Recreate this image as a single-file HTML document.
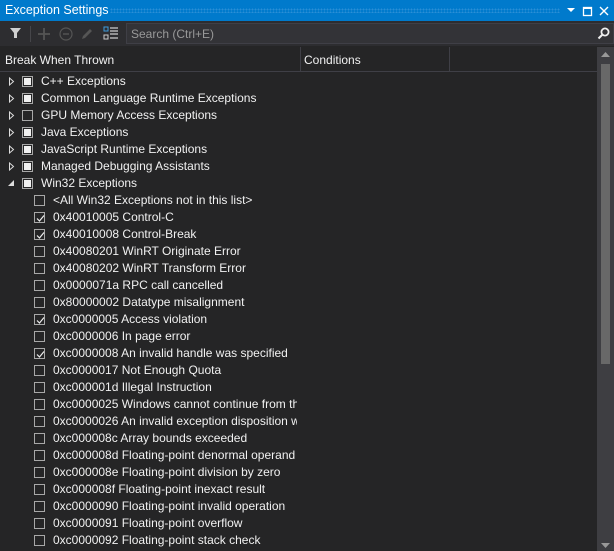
<!DOCTYPE html>
<html><head><meta charset="utf-8">
<style>
*{margin:0;padding:0;box-sizing:border-box}
body{width:614px;height:551px;overflow:hidden;background:#252526;font-family:"Liberation Sans",sans-serif;font-size:12px;color:#f1f1f1;position:relative}
.title{position:absolute;left:0;top:0;width:614px;height:21px;background:#007acc}
.title span{position:absolute;left:5px;top:3px;font-size:12.5px;color:#fff}
.dots{position:absolute;left:110px;top:8px;width:450px;height:5px;background-image:radial-gradient(#2a8fd6 0.8px,transparent 0.9px);background-size:3px 3px}
.tb{position:absolute;left:0;top:21px;width:614px;height:25px;background:#2d2d30}
.search{position:absolute;left:126px;top:23px;width:488px;height:21px;background:#333337;border:1px solid #3f3f46}
.search span{position:absolute;left:4px;top:3px;color:#999;font-size:12px}
.hdr{position:absolute;left:0;top:47px;width:597px;height:25px;background:#252526;border-bottom:1px solid #3f3f46}
.hdr span{position:absolute;top:6px}
.sep{position:absolute;top:47px;width:1px;height:24px;background:#3f3f46}
.row{position:absolute;height:17px;width:297px;overflow:hidden;white-space:nowrap}
.row .t{position:absolute;top:1px}
.cb{position:absolute;top:3px;width:11px;height:11px;border:1px solid #a8a8a8}
.cb.f::after{content:"";position:absolute;left:1px;top:1px;width:7px;height:7px;background:#f1f1f1}
.tri{position:absolute;left:8px;top:4px}
.sb{position:absolute;left:597px;top:47px;width:17px;height:504px;background:#3e3e42}
.thumb{position:absolute;left:4px;top:17px;width:9px;height:300px;background:#686868}
</style></head><body>
<div class="title"><span>Exception Settings</span><div class="dots"></div>
<svg style="position:absolute;left:566px;top:6px" width="44" height="12"><path d="M1 2h8l-4 4z" fill="#fff"/><rect x="17.5" y="1.5" width="8" height="8" fill="none" stroke="#fff" stroke-width="1.3"/><rect x="17" y="1" width="9" height="2" fill="#fff"/><path d="M34 1l8 8M42 1l-8 8" stroke="#fff" stroke-width="1.4"/></svg>
</div>
<div class="tb">
<svg style="position:absolute;left:0;top:0" width="126" height="25"><path d="M10 7h11l-4 5v5h-3v-5z" fill="#d0d0d0"/><rect x="30" y="5" width="1" height="16" fill="#46464a"/><path d="M44 7v12M38 13h12" stroke="#555" stroke-width="1.8"/><circle cx="66" cy="13" r="6" fill="none" stroke="#555" stroke-width="1.2"/><path d="M63 13h6" stroke="#555" stroke-width="1.4"/><path d="M82 18l1-3 7-7 2 2-7 7z" fill="#555"/><rect x="104" y="6" width="4" height="4" fill="none" stroke="#3d9bdc"/><rect x="104" y="14" width="4" height="4" fill="none" stroke="#ccc"/><path d="M110 7h8M110 10h8M110 13h8M110 17h8" stroke="#ccc" stroke-width="1.2"/></svg>
</div>
<div class="search"><span>Search (Ctrl+E)</span>
<svg style="position:absolute;right:3px;top:3px" width="13" height="13"><circle cx="8" cy="5" r="3.6" fill="none" stroke="#eee" stroke-width="1.8"/><path d="M5.5 7.5l-4 4" stroke="#eee" stroke-width="2"/></svg></div>
<div class="hdr"><span style="left:5px">Break When Thrown</span><span style="left:304px">Conditions</span></div>
<div class="sep" style="left:300px"></div><div class="sep" style="left:449px"></div>
<div class="sb"><svg style="position:absolute;left:4px;top:5px" width="9" height="6"><path d="M0 5h9L4.5 0z" fill="#999"/></svg><div class="thumb"></div>
<svg style="position:absolute;left:4px;top:496px" width="9" height="6"><path d="M0 0h9L4.5 5z" fill="#999"/></svg></div>
<div id="rows"></div>
<script>
var P=[["C++ Exceptions",1],["Common Language Runtime Exceptions",1],["GPU Memory Access Exceptions",0],["Java Exceptions",1],["JavaScript Runtime Exceptions",1],["Managed Debugging Assistants",1],["Win32 Exceptions",1,1]];
var C=[["<All Win32 Exceptions not in this list>",0],["0x40010005 Control-C",1],["0x40010008 Control-Break",1],["0x40080201 WinRT Originate Error",0],["0x40080202 WinRT Transform Error",0],["0x0000071a RPC call cancelled",0],["0x80000002 Datatype misalignment",0],["0xc0000005 Access violation",1],["0xc0000006 In page error",0],["0xc0000008 An invalid handle was specified",1],["0xc0000017 Not Enough Quota",0],["0xc000001d Illegal Instruction",0],["0xc0000025 Windows cannot continue from this exception",0],["0xc0000026 An invalid exception disposition was returned",0],["0xc000008c Array bounds exceeded",0],["0xc000008d Floating-point denormal operand",0],["0xc000008e Floating-point division by zero",0],["0xc000008f Floating-point inexact result",0],["0xc0000090 Floating-point invalid operation",0],["0xc0000091 Floating-point overflow",0],["0xc0000092 Floating-point stack check",0]];
var h="",y=73;
P.forEach(function(p){var tri=p[2]?'<svg class="tri" width="7" height="8"><path d="M6 1v6H0z" fill="#ddd"/></svg>':'<svg class="tri" width="7" height="9"><path d="M1.5 1v7l4-3.5z" fill="none" stroke="#ddd"/></svg>';
h+='<div class="row" style="top:'+y+'px;left:0">'+tri+'<div class="cb'+(p[1]?' f':'')+'" style="left:22px"></div><span class="t" style="left:41px">'+p[0].replace(/</g,"&lt;")+'</span></div>';y+=17;});
C.forEach(function(c){var ck=c[1]?'<svg style="position:absolute;left:1px;top:1px" width="9" height="9"><path d="M1 4.5l2.5 2.5L8 1.5" fill="none" stroke="#eee" stroke-width="1.2"/></svg>':'';
h+='<div class="row" style="top:'+y+'px;left:0"><div class="cb" style="left:34px">'+ck+'</div><span class="t" style="left:53px">'+c[0].replace(/</g,"&lt;").replace(/>/g,"&gt;")+'</span></div>';y+=17;});
document.getElementById("rows").innerHTML=h;
</script>
</body></html>
